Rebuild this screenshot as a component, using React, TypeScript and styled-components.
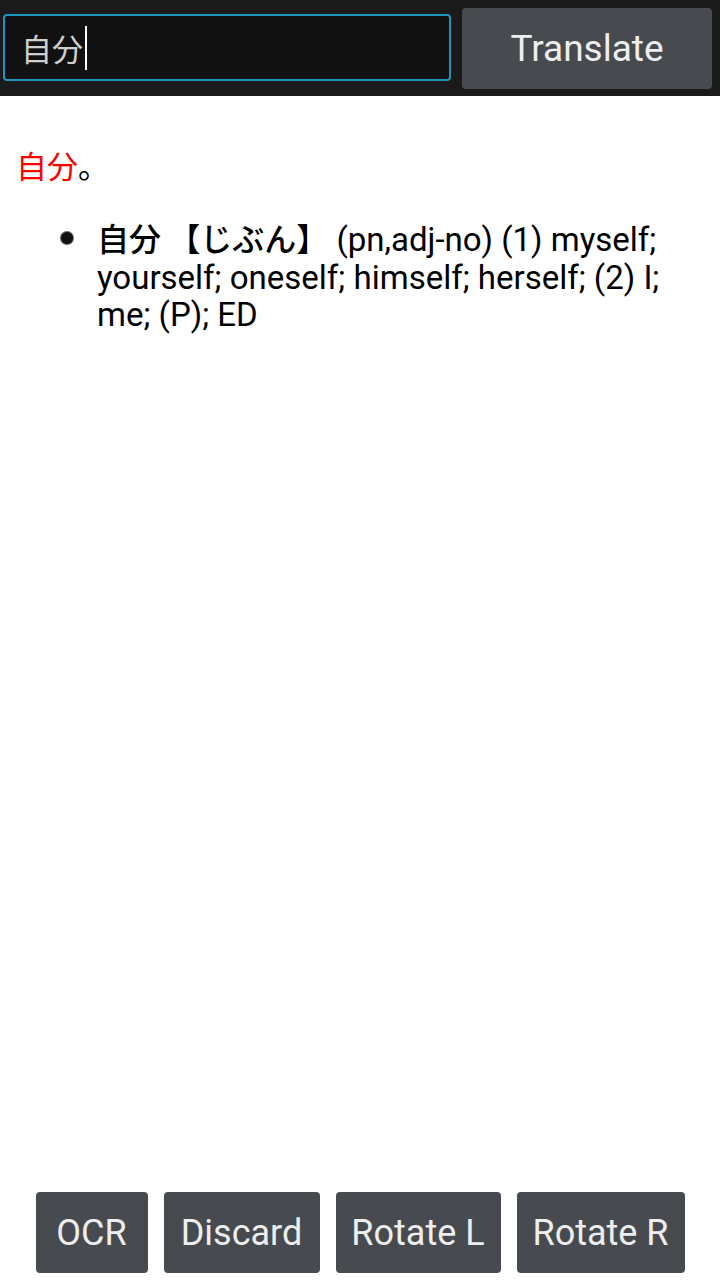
import React from "react";
import styled, { createGlobalStyle } from "styled-components";

const Global = createGlobalStyle`
  html, body { margin: 0; padding: 0; background: #ffffff; }
  body { font-family: Roboto, "Noto Sans CJK JP", sans-serif; }
  #root { min-height: 1280px; }
`;

const Page = styled.div`
  width: 720px;
  height: 1280px;
  display: flex;
  flex-direction: column;
  background: #ffffff;
`;

const TopBar = styled.div`
  height: 96px;
  background: #1a1a1a;
  display: flex;
  align-items: center;
  padding: 0 8px 0 3px;
  gap: 11px;
  box-sizing: border-box;
`;

const InputBox = styled.div`
  width: 448px;
  height: 67px;
  margin-top: -1px;
  box-sizing: border-box;
  border: 2px solid #1e94c0;
  border-radius: 4px;
  background: #111111;
  display: flex;
  align-items: center;
  padding-left: 16px;
  font-family: "Noto Sans CJK JP", sans-serif;
  font-size: 31px;
  color: #cfcfcf;
`;

const Caret = styled.span`
  display: inline-block;
  width: 2px;
  height: 44px;
  background: #ffffff;
  margin-left: 2px;
`;

const DarkButton = styled.button<{ $w: number; $h: number; $fs: number }>`
  width: ${(p) => p.$w}px;
  height: ${(p) => p.$h}px;
  background: #474b4f;
  border: none;
  border-radius: 4px;
  color: #eeeeee;
  font-family: Roboto, sans-serif;
  font-size: ${(p) => p.$fs}px;
  padding: 0;
  display: flex;
  align-items: center;
  justify-content: center;
`;

const Content = styled.div`
  flex: 1;
  padding: 0 17px 0 16px;
  font-family: Roboto, "Noto Sans CJK JP", sans-serif;
  color: #000;
`;

const Heading = styled.div`
  margin-top: 47px;
  font-family: "Noto Sans CJK JP", sans-serif;
  font-size: 31px;
  line-height: 44px;
`;

const Red = styled.span`
  color: #ff0000;
`;

const List = styled.ul`
  margin: 32px 0 0 0;
  padding-left: 81px;
  list-style: none;
`;

const Item = styled.li`
  position: relative;
  font-size: 33px;
  line-height: 37.5px;
  &::before {
    content: "";
    position: absolute;
    left: -36px;
    top: 13px;
    width: 12px;
    height: 12px;
    border-radius: 50%;
    background: #111;
    box-shadow: 0 0 0 1px #666;
  }
`;

const Word = styled.span`
  font-family: "Noto Sans CJK JP", sans-serif;
  font-weight: 500;
  font-size: 32px;
`;

const BottomBar = styled.div`
  display: flex;
  justify-content: center;
  gap: 16px;
  padding-bottom: 7px;
`;

export default function App() {
  return (
    <Page>
      <Global />
      <TopBar>
        <InputBox>
          自分
          <Caret />
        </InputBox>
        <DarkButton $w={250} $h={81} $fs={37}>Translate</DarkButton>
      </TopBar>
      <Content>
        <Heading>
          <Red>自分</Red>。
        </Heading>
        <List>
          <Item>
            <Word>自分 【じぶん】</Word> (pn,adj-no) (1) myself; yourself; oneself; himself; herself; (2) I; me; (P); ED
          </Item>
        </List>
      </Content>
      <BottomBar>
        <DarkButton $w={112} $h={81} $fs={36}>OCR</DarkButton>
        <DarkButton $w={156} $h={81} $fs={36}>Discard</DarkButton>
        <DarkButton $w={165} $h={81} $fs={36}>Rotate L</DarkButton>
        <DarkButton $w={168} $h={81} $fs={36}>Rotate R</DarkButton>
      </BottomBar>
    </Page>
  );
}
